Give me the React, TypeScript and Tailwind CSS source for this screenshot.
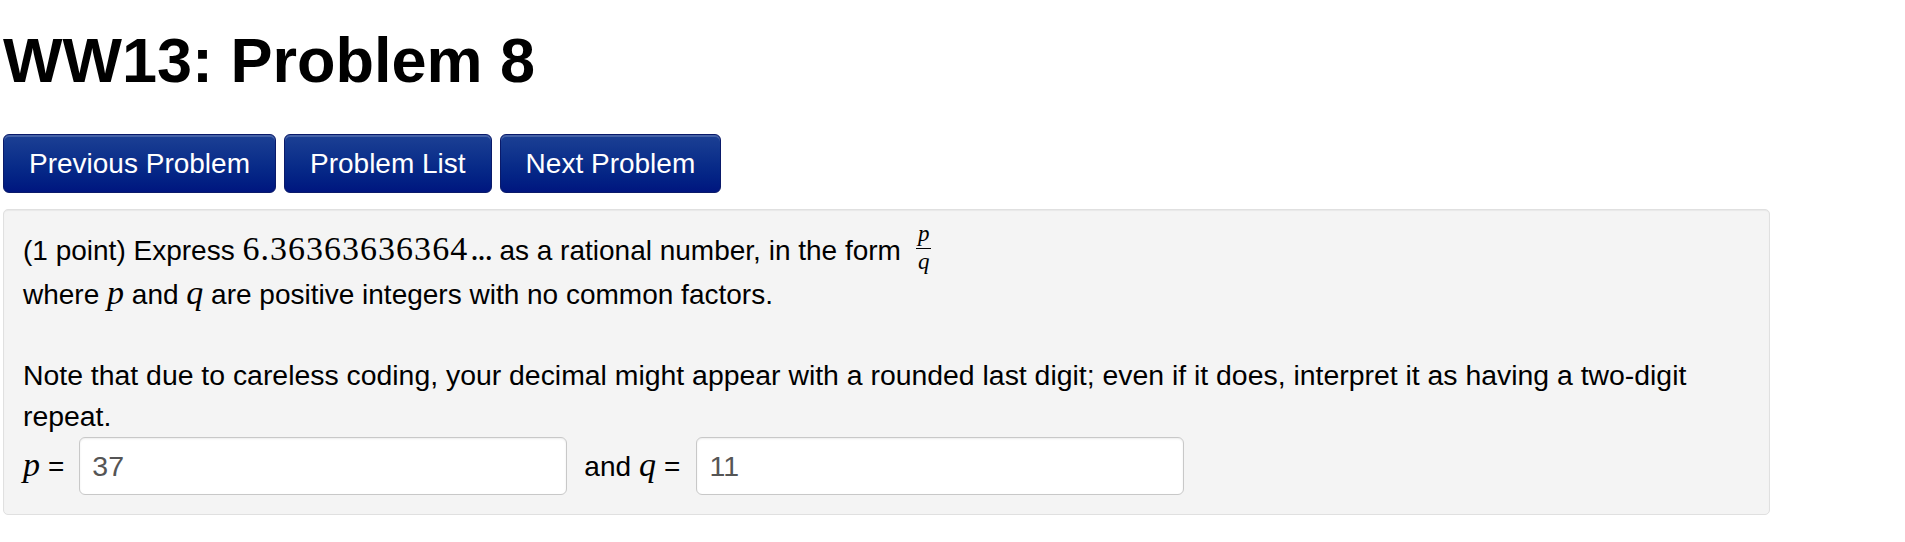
import React from "react";

const SANS = "font-['Liberation_Sans',Arial,Helvetica,sans-serif]";
const SERIF = "font-['Liberation_Serif','Times_New_Roman',serif]";

function MI({ children }: { children: React.ReactNode }) {
  return <span className={`${SERIF} italic text-[34px]`}>{children}</span>;
}

function Frac() {
  return (
    <span className={`${SERIF} italic text-[23px] inline-flex flex-col items-center align-[19px] ml-[15px]`}>
      <span className="leading-[23px] px-[2px]">p</span>
      <span className="block h-[1.5px] w-full bg-black mt-[2.5px]" />
      <span className="leading-[23px] mt-[1px]">q</span>
    </span>
  );
}

function Btn({ label }: { label: string }) {
  return (
    <button
      type="button"
      className="h-[59px] px-[25px] rounded-[6px] border border-[#0a1a6a] bg-linear-to-b from-[#1c4094] to-[#00157f] text-white text-[28px] leading-none shadow-[inset_0_2px_0_rgba(255,255,255,0.18)] flex items-center"
    >
      {label}
    </button>
  );
}

export default function App() {
  return (
    <div className={`${SANS} text-black bg-white min-h-[542px] px-[3px]`}>
      <h1 className="text-[63px] font-bold leading-[80px] pt-[20px] m-0">WW13: Problem 8</h1>
      <div className="flex gap-[8px] mt-[34px]">
        <Btn label="Previous Problem" />
        <Btn label="Problem List" />
        <Btn label="Next Problem" />
      </div>
      <div className="mt-[16px] w-[1767px] bg-[#f4f4f4] border border-[#e0e0e0] rounded-[5px] shadow-[inset_0_1px_1px_rgba(0,0,0,0.05)] pt-[12px] px-[19px] pb-[19px]">
        <div className="text-[28px] leading-[40px]">
          (1 point) Express{" "}
          <span className={`${SERIF} text-[34px]`}>
            <span className="tracking-[0.03em]">6.36363636364</span>
            <span className="ml-[2px] tracking-[-0.04em]">...</span>
          </span>{" "}
          as a rational number, in the form
          <Frac />
          <br />
          where <MI>p</MI> and <MI>q</MI> are positive integers with no common factors.
          <br />
          <br />
          <span className="text-[28.4px]">
            Note that due to careless coding, your decimal might appear with a rounded last digit; even if it does,
            interpret it as having a two-digit repeat.
          </span>
        </div>
        <div className="flex items-baseline mt-[0px] text-[28px]">
          <MI>p</MI>
          <span className="ml-[8px]">=</span>
          <input
            readOnly
            value="37"
            className="ml-[15px] w-[488px] h-[58px] bg-white border border-[#c8c8c8] rounded-[6px] px-[12px] text-[28.5px] text-[#555] shadow-[inset_0_1px_2px_rgba(0,0,0,0.08)] outline-none"
          />
          <span className="ml-[17px]">and</span>
          <span className="ml-[8px]">
            <MI>q</MI>
          </span>
          <span className="ml-[8px]">=</span>
          <input
            readOnly
            value="11"
            className="ml-[16px] w-[488px] h-[58px] bg-white border border-[#c8c8c8] rounded-[6px] px-[12px] text-[28.5px] text-[#555] shadow-[inset_0_1px_2px_rgba(0,0,0,0.08)] outline-none"
          />
        </div>
      </div>
    </div>
  );
}
